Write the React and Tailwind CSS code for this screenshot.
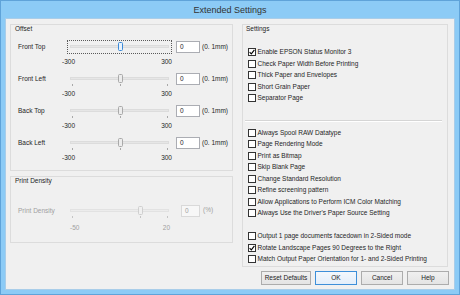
import React from "react";

const ROW = "h-[11.5px]";

function Slider({ thumb, ticks, focused, disabled }) {
  return (
    <div
      className={
        "relative w-[105px] h-[14px] shrink-0 " +
        (focused ? "outline-1 outline-dotted outline-[#5a5a5a] -outline-offset-1" : "")
      }
    >
      <div
        className={
          "absolute left-[3px] right-[3px] top-[5px] h-[3px] border " +
          (disabled ? "bg-[#ececec] border-[#e2e2e2]" : "bg-[#e6e6e6] border-[#dcdcdc]")
        }
      />
      {!focused &&
        ticks.map((t) => (
          <div
            key={t}
            className={"absolute top-[12px] w-px h-[2px] " + (disabled ? "bg-[#c4c4c4]" : "bg-[#a8a8a8]")}
            style={{ left: t }}
          />
        ))}
      <div
        className={
          "absolute top-[2px] w-[5px] h-[9px] rounded-[1.5px] border " +
          (focused
            ? "border-[#3c8ad8] bg-[#e8f2fc]"
            : disabled
            ? "border-[#cfcfcf] bg-[#f0f0f0]"
            : "border-[#a9a9a9] bg-[#ececec]")
        }
        style={{ left: thumb - 2 }}
      />
    </div>
  );
}

function OffsetRow({ label, focused }) {
  return (
    <div className="h-[32px]">
      <div className="flex items-center h-[14px]">
        <div className="w-[49px] shrink-0">{label}</div>
        <Slider thumb={53} ticks={[5, 53, 100]} focused={focused} />
        <div className="ml-[4px] w-[24px] h-[12px] border border-[#abadb3] bg-white pl-[3px] leading-[10px] shrink-0">
          0
        </div>
        <div className="ml-[2px] -mt-[1px] whitespace-nowrap">(0. 1mm)</div>
      </div>
      <div className="mt-[4px] h-[8px] leading-[8px] pl-[44px]">
        <div className="w-[110px] flex justify-between">
          <span>-300</span>
          <span>300</span>
        </div>
      </div>
    </div>
  );
}

function Check({ label, checked }) {
  return (
    <div className={"flex items-center " + ROW}>
      <div className="w-[8px] h-[8px] border border-[#333333] bg-white flex items-center justify-center shrink-0">
        {checked && (
          <svg width="6" height="6" viewBox="0 0 6 6">
            <path d="M0.6 3.2 L2.3 4.9 L5.4 0.9" fill="none" stroke="#000" strokeWidth="1.1" />
          </svg>
        )}
      </div>
      <span className="ml-[1.5px] whitespace-nowrap">{label}</span>
    </div>
  );
}

function Btn({ children, w, primary }) {
  return (
    <div
      className={
        "h-[14px] flex items-center justify-center border bg-gradient-to-b " +
        w +
        (primary
          ? " border-[#3d8fd9] from-[#f3f8fd] to-[#e3eefa]"
          : " border-[#acacac] from-[#f0f0f0] to-[#e4e4e4]")
      }
    >
      {children}
    </div>
  );
}

export default function App() {
  return (
    <div className="w-[460px] h-[295px] bg-[#8ccbf6] border border-[#5fa3d9] flex flex-col font-['Liberation_Sans',Arial,sans-serif] text-[6.5px] text-[#1e1e1e] leading-[8px] overflow-hidden">
      <div className="h-[17px] shrink-0 flex items-center justify-center text-[9px] text-[#333] pt-[1px]">
        Extended Settings
      </div>
      <div className="mx-[4px] mb-[4px] flex-1 bg-[#f0f0f0] border border-[#a9cde9] flex flex-col">
        <div className="flex pl-[4px] pt-[5px]">
          {/* left column */}
          <div className="w-[223px] flex flex-col">
            <div className="h-[147px] border border-[#dcdcdc]">
              <div className="pl-[4px] h-[8px] leading-[8px] mt-[0px]">Offset</div>
              <div className="pl-[7px] mt-[7px]">
                <OffsetRow label="Front Top" focused />
                <OffsetRow label="Front Left" />
                <OffsetRow label="Back Top" />
                <OffsetRow label="Back Left" />
              </div>
            </div>
            <div className="mt-[5px] h-[67px] border border-[#dcdcdc] text-[#a0a0a0]">
              <div className="pl-[4px] h-[8px] leading-[8px] mt-[0px] text-[#1e1e1e]">Print Density</div>
              <div className="pl-[7px] mt-[19px]">
                <div className="flex items-center h-[14px]">
                  <div className="w-[49px] shrink-0">Print Density</div>
                  <Slider thumb={73} ticks={[5, 73, 100]} disabled />
                  <div className="ml-[9px] w-[19px] h-[12px] border border-[#d9d9d9] bg-[#f7f7f7] pl-[3px] leading-[10px] shrink-0">
                    0
                  </div>
                  <div className="ml-[3px] -mt-[2px]">(%)</div>
                </div>
                <div className="mt-[6px] h-[8px] leading-[8px] pl-[52px]">
                  <div className="w-[100px] flex justify-between">
                    <span>-50</span>
                    <span>20</span>
                  </div>
                </div>
              </div>
            </div>
          </div>
          {/* right column */}
          <div className="ml-[9px] w-[206px] h-[243px] border border-[#dcdcdc]">
            <div className="pl-[3px] h-[8px] leading-[8px]">Settings</div>
            <div className="pl-[5px] mt-[13.25px]">
              <Check label="Enable EPSON Status Monitor 3" checked />
              <Check label="Check Paper Width Before Printing" />
              <Check label="Thick Paper and Envelopes" />
              <Check label="Short Grain Paper" />
              <Check label="Separator Page" />
              <div className={ROW} />
              <div className={"flex items-center -ml-[3px] mr-[5px] " + ROW}>
                <div className="w-full h-[2px] border-t border-t-[#d5d5d5] border-b border-b-white" />
              </div>
              <Check label="Always Spool RAW Datatype" />
              <Check label="Page Rendering Mode" />
              <Check label="Print as Bitmap" />
              <Check label="Skip Blank Page" />
              <Check label="Change Standard Resolution" />
              <Check label="Refine screening pattern" />
              <Check label="Allow Applications to Perform ICM Color Matching" />
              <Check label="Always Use the Driver's Paper Source Setting" />
              <div className={ROW} />
              <Check label="Output 1 page documents facedown in 2-Sided mode" />
              <Check label="Rotate Landscape Pages 90 Degrees to the Right" checked />
              <Check label="Match Output Paper Orientation for  1- and 2-Sided Printing" />
            </div>
          </div>
        </div>
        <div className="flex justify-end gap-[4px] pr-[5px] mt-[4px]">
          <Btn w="w-[50px]">Reset Defaults</Btn>
          <Btn w="w-[42px]" primary>
            OK
          </Btn>
          <Btn w="w-[42px]">Cancel</Btn>
          <Btn w="w-[42px]">Help</Btn>
        </div>
      </div>
    </div>
  );
}
